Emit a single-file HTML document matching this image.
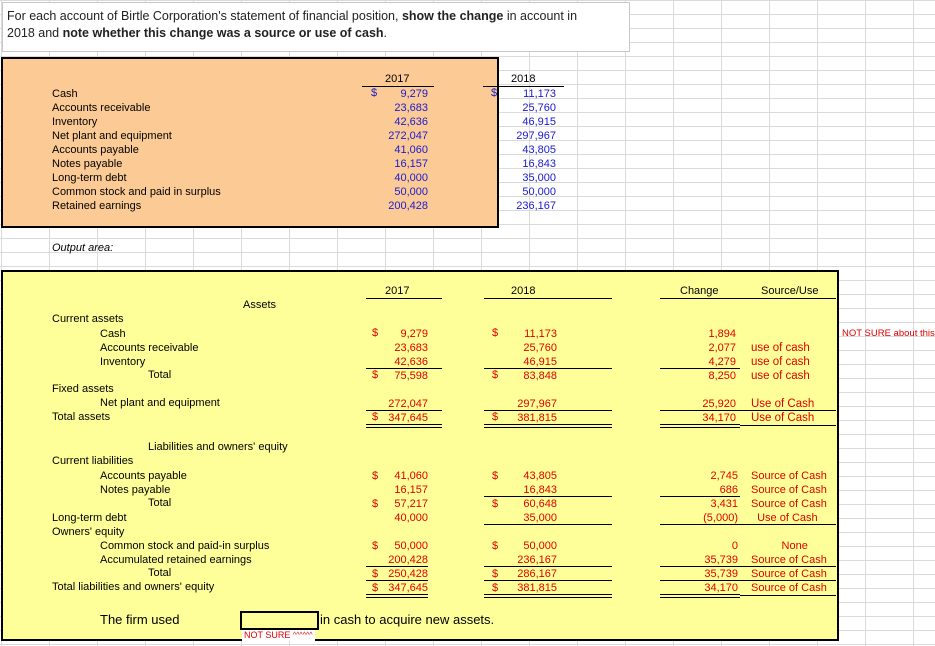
<!DOCTYPE html>
<html><head><style>
body{margin:0;width:935px;height:646px;overflow:hidden;position:relative;font-family:"Liberation Sans",Arial,sans-serif;
background-color:#fff;
background-image:linear-gradient(to right,#dadada 1px,transparent 1px),linear-gradient(to bottom,#dadada 1px,transparent 1px);
background-size:48px 100%,100% 14px;background-position:1px 0,0 0px;}
.a{position:absolute;white-space:nowrap;font-size:11px;line-height:13px;}
.r{color:#e00000}
.b{color:#1a1ad0}
.n{text-align:right}
.l{position:absolute;height:0;border-top:1px solid #000}
.d{position:absolute;height:2px;border-top:1px solid #000;border-bottom:1px solid #000}
</style></head><body>
<div style="position:absolute;left:2px;top:2px;width:626px;height:48px;background:#fff;border:1px solid #c8c8c8"></div>
<div class="a" style="left:7px;top:8px;font-size:12.5px;line-height:17px;color:#222">For each account of Birtle Corporation's statement of financial position, <b>show the change</b> in account in<br>2018 and <b>note whether this change was a source or use of cash</b>.</div>

<div style="position:absolute;left:1px;top:57px;width:494px;height:167px;background:#fccb95;border:2px solid #000"></div>
<div class="a" style="left:385px;top:73px">2017</div><div class="l" style="left:362px;top:86px;width:72px"></div>
<div class="a" style="left:511px;top:73px">2018</div><div class="l" style="left:483px;top:86px;width:81px"></div>
<div class="a" style="left:52px;top:87px;line-height:14px">Cash<br>Accounts receivable<br>Inventory<br>Net plant and equipment<br>Accounts payable<br>Notes payable<br>Long-term debt<br>Common stock and paid in surplus<br>Retained earnings</div>
<div class="a b" style="left:371px;top:87px">$</div><div class="a b" style="left:491px;top:87px">$</div>
<div class="a b n" style="left:370px;width:58px;top:87px;line-height:14px">9,279<br>23,683<br>42,636<br>272,047<br>41,060<br>16,157<br>40,000<br>50,000<br>200,428</div>
<div class="a b n" style="left:500px;width:56px;top:87px;line-height:14px">11,173<br>25,760<br>46,915<br>297,967<br>43,805<br>16,843<br>35,000<br>50,000<br>236,167</div>

<div class="a" style="left:52px;top:242px;font-style:italic">Output area:</div>

<div style="position:absolute;left:1px;top:270px;width:834px;height:367px;background:#ffff99;border:2px solid #000"></div>
<div class="a" style="left:385px;top:285px">2017</div><div class="l" style="left:366px;top:298px;width:76px"></div>
<div class="a" style="left:511px;top:285px">2018</div><div class="l" style="left:484px;top:298px;width:128px"></div>
<div class="a" style="left:680px;top:285px">Change</div><div class="a" style="left:761px;top:285px">Source/Use</div><div class="l" style="left:660px;top:298px;width:176px"></div>
<div class="a" style="left:243px;top:299px">Assets</div>
<div class="a" style="left:52px;top:313px">Current assets</div>
<div class="a" style="left:100px;top:327px;line-height:14px">Cash<br>Accounts receivable<br>Inventory</div>
<div class="a" style="left:148px;top:369px">Total</div>
<div class="a" style="left:52px;top:383px">Fixed assets</div>
<div class="a" style="left:100px;top:397px">Net plant and equipment</div>
<div class="a" style="left:52px;top:411px">Total assets</div>

<div class="a r" style="left:372px;top:327px">$</div><div class="a r" style="left:372px;top:369px">$</div><div class="a r" style="left:372px;top:411px">$</div>
<div class="a r n" style="left:380px;width:48px;top:327px;line-height:14px">9,279<br>23,683<br>42,636<br>75,598<br><br>272,047<br>347,645</div>
<div class="a r" style="left:492px;top:327px">$</div><div class="a r" style="left:492px;top:369px">$</div><div class="a r" style="left:492px;top:411px">$</div>
<div class="a r n" style="left:500px;width:57px;top:327px;line-height:14px">11,173<br>25,760<br>46,915<br>83,848<br><br>297,967<br>381,815</div>
<div class="a r n" style="left:680px;width:56px;top:327px;line-height:14px">1,894<br>2,077<br>4,279<br>8,250<br><br>25,920<br>34,170</div>
<div class="a r" style="left:751px;top:341px;line-height:14px;font-size:11.5px">use of cash<br>use of cash<br>use of cash<br><br>Use of Cash<br>Use of Cash</div>
<div class="a r" style="left:842px;top:327px;font-size:9.5px">NOT SURE about this</div>
<div class="l" style="left:366px;top:368px;width:76px"></div><div class="l" style="left:484px;top:368px;width:128px"></div><div class="l" style="left:660px;top:368px;width:80px"></div>
<div class="l" style="left:366px;top:410px;width:76px"></div><div class="l" style="left:484px;top:410px;width:128px"></div><div class="l" style="left:660px;top:410px;width:176px"></div>
<div class="d" style="left:366px;top:424px;width:76px"></div><div class="d" style="left:484px;top:424px;width:128px"></div><div class="d" style="left:660px;top:424px;width:80px"></div><div class="l" style="left:740px;top:425px;width:96px"></div>

<div class="a" style="left:148px;top:441px">Liabilities and owners' equity</div>
<div class="a" style="left:52px;top:455px">Current liabilities</div>
<div class="a" style="left:100px;top:469px;line-height:14px">Accounts payable<br>Notes payable</div>
<div class="a" style="left:148px;top:497px">Total</div>
<div class="a" style="left:52px;top:511px;line-height:14px">Long-term debt<br>Owners' equity</div>
<div class="a" style="left:100px;top:539px;line-height:14px">Common stock and paid-in surplus<br>Accumulated retained earnings</div>
<div class="a" style="left:148px;top:567px">Total</div>
<div class="a" style="left:52px;top:581px">Total liabilities and owners' equity</div>

<div class="a r" style="left:372px;top:469px;line-height:14px">$<br><br>$<br><br><br>$<br><br>$<br>$</div>
<div class="a r n" style="left:380px;width:48px;top:469px;line-height:14px">41,060<br>16,157<br>57,217<br>40,000<br><br>50,000<br>200,428<br>250,428<br>347,645</div>
<div class="a r" style="left:492px;top:469px;line-height:14px">$<br><br>$<br><br><br>$<br><br>$<br>$</div>
<div class="a r n" style="left:500px;width:57px;top:469px;line-height:14px">43,805<br>16,843<br>60,648<br>35,000<br><br>50,000<br>236,167<br>286,167<br>381,815</div>
<div class="a r n" style="left:680px;width:58px;top:469px;line-height:14px">2,745<br>686<br>3,431<br>(5,000)<br><br>0<br>35,739<br>35,739<br>34,170</div>
<div class="a r" style="left:751px;top:469px;line-height:14px;font-size:11px">Source of Cash<br>Source of Cash<br>Source of Cash<br>&nbsp;&nbsp;Use of Cash<br><br>&nbsp;&nbsp;&nbsp;&nbsp;&nbsp;&nbsp;&nbsp;&nbsp;&nbsp;&nbsp;None<br>Source of Cash<br>Source of Cash<br>Source of Cash</div>
<div class="l" style="left:366px;top:482px;width:0"></div>
<div class="l" style="left:484px;top:496px;width:128px"></div><div class="l" style="left:660px;top:496px;width:80px"></div>
<div class="l" style="left:484px;top:524px;width:128px"></div><div class="l" style="left:660px;top:524px;width:176px"></div>
<div class="l" style="left:366px;top:566px;width:62px"></div><div class="l" style="left:484px;top:566px;width:128px"></div><div class="l" style="left:660px;top:566px;width:176px"></div>
<div class="l" style="left:366px;top:580px;width:62px"></div><div class="l" style="left:484px;top:580px;width:128px"></div><div class="l" style="left:660px;top:580px;width:176px"></div>
<div class="d" style="left:366px;top:594px;width:62px"></div><div class="d" style="left:484px;top:594px;width:128px"></div><div class="d" style="left:660px;top:594px;width:80px"></div><div class="l" style="left:740px;top:595px;width:96px"></div>

<div class="a" style="left:100px;top:612px;font-size:13px;line-height:15px">The firm used</div>
<div style="position:absolute;left:240px;top:611px;width:75px;height:15px;border:2px solid #000"></div>
<div class="a" style="left:320px;top:612px;font-size:13px;line-height:15px">in cash to acquire new assets.</div>
<div class="a r" style="left:242px;top:630px;font-size:9px;line-height:11px;background:#fff;padding:0 2px">NOT SURE <span style="font-size:7px;vertical-align:top">^^^^^^</span></div>
</body></html>
